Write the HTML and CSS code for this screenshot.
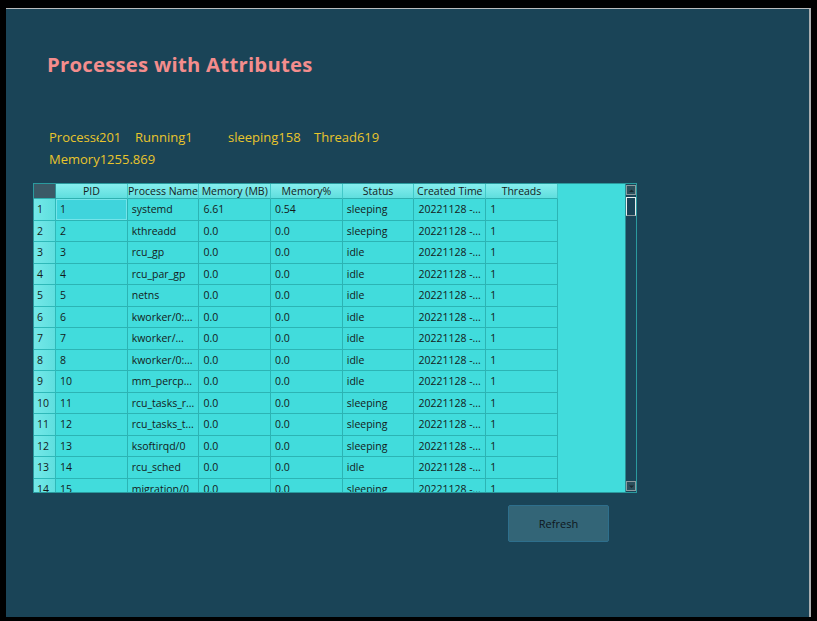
FILE: index.html
```html
<!DOCTYPE html>
<html>
<head>
<meta charset="utf-8">
<link rel="stylesheet" href="styles.css">
</head>
<body>
<div class="window">
  <h1 class="title">Processes with Attributes</h1>
  <div class="stats">
    <div class="stat s1"><span class="clip">Processes</span>201</div>
    <div class="stat s2">Running1</div>
    <div class="stat s3">sleeping158</div>
    <div class="stat s4">Thread619</div>
  </div>
  <div class="stats second">
    <div class="stat">Memory1255.869</div>
  </div>
  <div class="tablebox">
    <div class="view">
      <table class="grid">
        <colgroup>
          <col class="c-idx"><col class="c"><col class="c"><col class="c"><col class="c"><col class="c"><col class="c"><col class="c"><col>
        </colgroup>
        <thead>
          <tr><th class="corner"></th><th>PID</th><th>Process Name</th><th>Memory (MB)</th><th>Memory%</th><th>Status</th><th>Created Time</th><th>Threads</th><th class="blank"></th></tr>
        </thead>
        <tbody>
          <tr><th>1</th><td class="cur">1</td><td>systemd</td><td>6.61</td><td>0.54</td><td>sleeping</td><td>20221128 -...</td><td>1</td><td class="blank"></td></tr>
          <tr><th>2</th><td>2</td><td>kthreadd</td><td>0.0</td><td>0.0</td><td>sleeping</td><td>20221128 -...</td><td>1</td><td class="blank"></td></tr>
          <tr><th>3</th><td>3</td><td>rcu_gp</td><td>0.0</td><td>0.0</td><td>idle</td><td>20221128 -...</td><td>1</td><td class="blank"></td></tr>
          <tr><th>4</th><td>4</td><td>rcu_par_gp</td><td>0.0</td><td>0.0</td><td>idle</td><td>20221128 -...</td><td>1</td><td class="blank"></td></tr>
          <tr><th>5</th><td>5</td><td>netns</td><td>0.0</td><td>0.0</td><td>idle</td><td>20221128 -...</td><td>1</td><td class="blank"></td></tr>
          <tr><th>6</th><td>6</td><td>kworker/0:...</td><td>0.0</td><td>0.0</td><td>idle</td><td>20221128 -...</td><td>1</td><td class="blank"></td></tr>
          <tr><th>7</th><td>7</td><td>kworker/...</td><td>0.0</td><td>0.0</td><td>idle</td><td>20221128 -...</td><td>1</td><td class="blank"></td></tr>
          <tr><th>8</th><td>8</td><td>kworker/0:...</td><td>0.0</td><td>0.0</td><td>idle</td><td>20221128 -...</td><td>1</td><td class="blank"></td></tr>
          <tr><th>9</th><td>10</td><td>mm_percp...</td><td>0.0</td><td>0.0</td><td>idle</td><td>20221128 -...</td><td>1</td><td class="blank"></td></tr>
          <tr><th>10</th><td>11</td><td>rcu_tasks_r...</td><td>0.0</td><td>0.0</td><td>sleeping</td><td>20221128 -...</td><td>1</td><td class="blank"></td></tr>
          <tr><th>11</th><td>12</td><td>rcu_tasks_t...</td><td>0.0</td><td>0.0</td><td>sleeping</td><td>20221128 -...</td><td>1</td><td class="blank"></td></tr>
          <tr><th>12</th><td>13</td><td>ksoftirqd/0</td><td>0.0</td><td>0.0</td><td>sleeping</td><td>20221128 -...</td><td>1</td><td class="blank"></td></tr>
          <tr><th>13</th><td>14</td><td>rcu_sched</td><td>0.0</td><td>0.0</td><td>idle</td><td>20221128 -...</td><td>1</td><td class="blank"></td></tr>
          <tr><th>14</th><td>15</td><td>migration/0</td><td>0.0</td><td>0.0</td><td>sleeping</td><td>20221128 -...</td><td>1</td><td class="blank"></td></tr>
        </tbody>
      </table>
    </div>
    <div class="scrollbar">
      <div class="sbtn"><svg width="7" height="5" viewBox="0 0 7 5"><path d="M1 4 L3.5 1.5 L6 4 Z" fill="#1c2a30"/></svg></div>
      <div class="track"><div class="handle"></div></div>
      <div class="sbtn"><svg width="7" height="5" viewBox="0 0 7 5"><path d="M1 1.5 L3.5 4 L6 1.5 Z" fill="#1c2a30"/></svg></div>
    </div>
  </div>
  <div class="actions">
    <button class="refresh">Refresh</button>
  </div>
</div>
</body>
</html>
```
FILE: styles.css
```css
html, body {
  margin: 0;
  padding: 0;
  background: #000;
  width: 817px;
  height: 621px;
  overflow: hidden;
}
.window {
  margin: 8px 0 0 6px;
  width: 803px;
  height: 608px;
  background: #1a4457;
  border-top: 1px solid #b9bcbd;
  border-right: 2px solid #a9adaf;
  font-family: "Open Sans", "Noto Sans", sans-serif;
  overflow: hidden;
}
.title {
  margin: 0;
  padding: 40px 0 0 41px;
  font-size: 20.3px;
  font-weight: 700;
  line-height: 31px;
  color: #f48d8d;
  letter-spacing: 0.25px;
}
.stats {
  display: flex;
  padding-left: 43px;
  margin-top: 48px;
  font-size: 13px;
  line-height: 18px;
  color: #e9c52c;
}
.stats.second {
  margin-top: 4px;
}
.stat { white-space: nowrap; }
.s1 { width: 86px; }
.s2 { width: 93px; }
.s3 { width: 86px; }
.clip {
  display: inline-block;
  width: 50px;
  overflow: hidden;
  vertical-align: top;
}
.tablebox {
  display: flex;
  margin: 15px 0 0 27px;
  width: 602px;
  height: 308px;
  border: 1px solid #2a9a9e;
}
.view {
  flex: 1;
  background: #41dcdc;
  overflow: hidden;
}
.grid {
  border-collapse: separate;
  border-spacing: 0;
  table-layout: fixed;
  width: 592px;
  font-family: "Open Sans", "Noto Sans", sans-serif;
  font-size: 10.5px;
  color: #141a1a;
}
.c-idx { width: 22px; }
.c { width: 71.7px; }
.grid thead th {
  height: 14px;
  padding: 0;
  font-weight: 400;
  text-align: center;
  line-height: 14px;
  background: linear-gradient(#86eeee, #5fdede);
  border-right: 1px solid #43c8c8;
  border-bottom: 1px solid #2fb0b0;
  white-space: nowrap;
  overflow: hidden;
}
.grid thead th.corner {
  background: #3b5966;
  border-right: 1px solid #2c8e94;
}
.grid thead th.blank {
  background: #41dcdc;
  border: 0;
}
.grid tbody th {
  height: 20.5px;
  padding: 0 0 0 3px;
  font-weight: 400;
  text-align: left;
  background: linear-gradient(90deg, #74e8e8, #5edfdf);
  border-right: 1px solid #2fb8b8;
  border-bottom: 1px solid #2fb8b8;
}
.grid td {
  height: 20.5px;
  padding: 0 0 0 4px;
  border-right: 1px solid #2cb4b4;
  border-bottom: 1px solid #2cb4b4;
  white-space: nowrap;
  overflow: hidden;
}
.grid td.cur {
  background: #3fd4dc;
  box-shadow: inset 0 0 0 1px #74e4ea;
}
.grid td.blank {
  border: 0;
}
.scrollbar {
  width: 10px;
  display: flex;
  flex-direction: column;
  background: #1a4457;
  border-left: 1px solid #2b8d93;
}
.sbtn {
  height: 8px;
  margin: 1px 0;
  border: 1px solid #8d9a9e;
  background: #2c4f5c;
  display: flex;
  align-items: center;
  justify-content: center;
}
.sbtn svg { display: block; }
.track {
  flex: 1;
  padding-top: 1px;
}
.handle {
  height: 17px;
  border: 1px solid #e8eeee;
  border-bottom-color: #8a9699;
  background: #1a4457;
}
.actions {
  padding: 12px 0 0 502px;
}
.refresh {
  width: 101px;
  height: 37px;
  background: #336577;
  border: 1px solid #2e6f8c;
  border-radius: 2px;
  font-family: "Open Sans", "Noto Sans", sans-serif;
  font-size: 11px;
  color: #0e161c;
  padding: 0;
}
```
